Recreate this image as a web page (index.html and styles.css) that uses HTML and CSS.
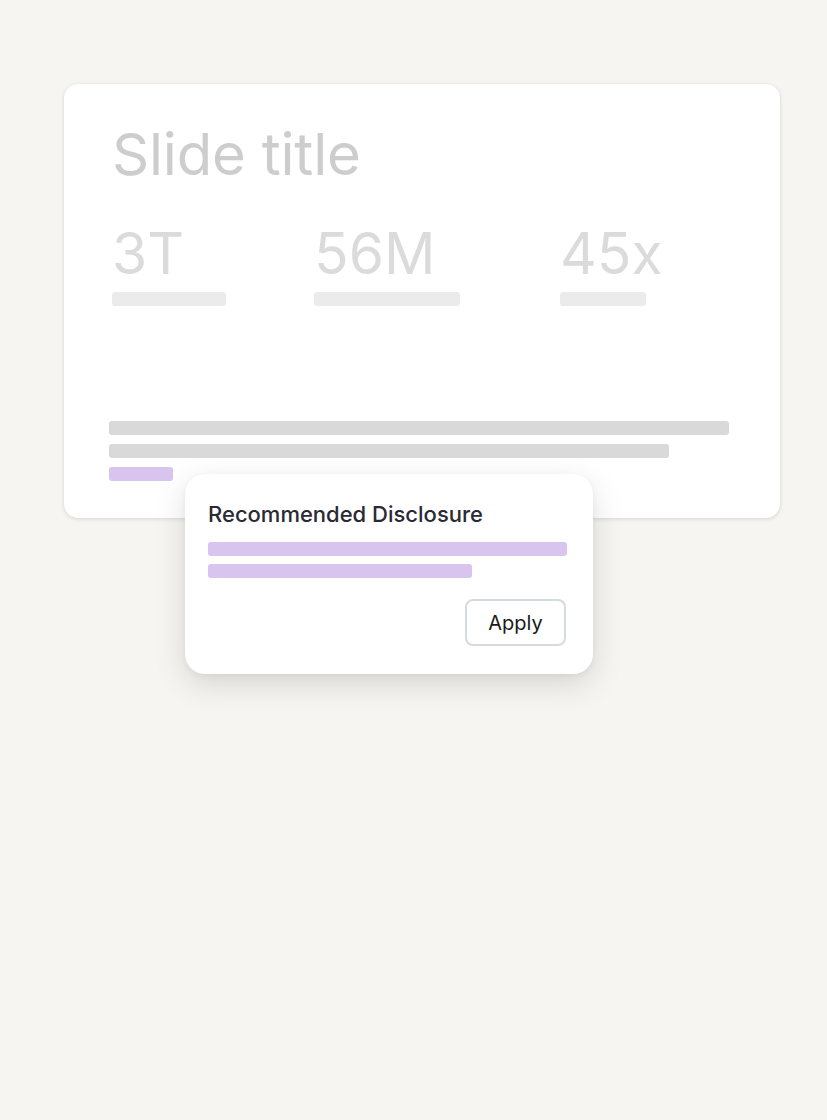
FILE: index.html
```html
<!DOCTYPE html>
<html lang="en">
<head>
<meta charset="utf-8">
<title>Slide</title>
<link rel="stylesheet" href="styles.css">
</head>
<body>
<div class="page">
  <div class="card">
    <h1 class="title">Slide title</h1>
    <div class="stats">
      <div class="stat stat-1">
        <div class="stat-value">3T</div>
        <div class="bar bar-light" style="width:114px"></div>
      </div>
      <div class="stat stat-2">
        <div class="stat-value">56M</div>
        <div class="bar bar-light" style="width:146px"></div>
      </div>
      <div class="stat stat-3">
        <div class="stat-value">45x</div>
        <div class="bar bar-light" style="width:86px"></div>
      </div>
    </div>
    <div class="lines">
      <div class="bar bar-gray" style="width:620px"></div>
      <div class="bar bar-gray" style="width:560px"></div>
      <div class="bar bar-purple" style="width:64px"></div>
    </div>
    <div class="popup">
      <div class="popup-title">Recommended Disclosure</div>
      <div class="popup-lines">
        <div class="bar bar-purple" style="width:359px"></div>
        <div class="bar bar-purple" style="width:264px"></div>
      </div>
      <div class="popup-actions">
        <button class="btn">Apply</button>
      </div>
    </div>
  </div>
</div>
</body>
</html>
```

FILE: styles.css
```css
* { box-sizing: border-box; }
html, body {
  margin: 0;
  padding: 0;
  background: #f6f5f2;
  font-family: Inter, "Noto Sans", sans-serif;
}
.page {
  width: 827px;
  height: 1120px;
  padding: 84px 47px 0 64px;
}
.card {
  position: relative;
  width: 716px;
  height: 434px;
  background: #ffffff;
  border-radius: 14px;
  box-shadow: 0 1px 4px rgba(0, 0, 0, 0.13), 0 0 1px rgba(0, 0, 0, 0.06);
  padding: 36px 48px 0 48px;
}
.title {
  margin: 0;
  font-size: 58px;
  line-height: 68px;
  font-weight: 400;
  color: #cdcdcd;
  letter-spacing: -0.2px;
}
.stats {
  display: flex;
  margin-top: 32px;
}
.stat { display: flex; flex-direction: column; }
.stat-1 { width: 202px; }
.stat-2 { width: 246px; }
.stat-value {
  font-size: 57px;
  line-height: 68px;
  color: #dbdbdb;
  font-weight: 400;
}
.bar {
  height: 14px;
  border-radius: 3px;
}
.stat .bar { margin-top: 4px; }
.bar-light { background: #ebebeb; }
.bar-gray { background: #d9d9d9; }
.bar-purple { background: #d8c4ee; }
.lines {
  margin-top: 115px;
  margin-left: -3px;
  display: flex;
  flex-direction: column;
  gap: 9px;
}
.popup {
  position: absolute;
  left: 121px;
  top: 390px;
  width: 408px;
  height: 200px;
  background: #ffffff;
  border-radius: 20px;
  box-shadow: 0 10px 32px rgba(0, 0, 0, 0.13), 0 2px 6px rgba(0, 0, 0, 0.05);
  padding: 27px 27px 0 23px;
}
.popup-title {
  font-size: 22px;
  line-height: 26px;
  font-weight: 500;
  color: #2a2a35;
}
.popup-lines {
  margin-top: 15px;
  display: flex;
  flex-direction: column;
  gap: 8px;
}
.popup-actions {
  display: flex;
  justify-content: flex-end;
  margin-top: 21px;
}
.btn {
  width: 101px;
  height: 47px;
  border: 2px solid #d6dbe0;
  border-radius: 8px;
  background: #ffffff;
  font-family: Inter, "Noto Sans", sans-serif;
  font-size: 20px;
  color: #1a1a1a;
  padding: 0;
}
```
